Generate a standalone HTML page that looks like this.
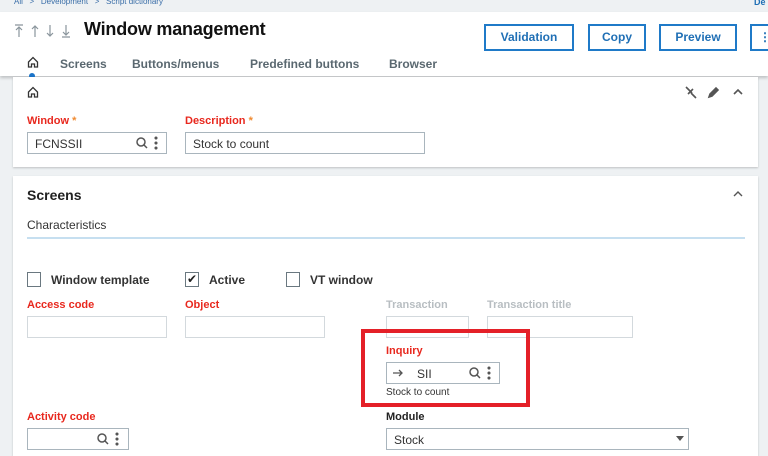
<!DOCTYPE html><html><head><meta charset="utf-8"><style>
*{box-sizing:border-box;margin:0;padding:0}
body{width:768px;height:451px;overflow:hidden;background:#eef1f3;font-family:"Liberation Sans",sans-serif;position:relative;font-size:12px;color:#222}
.a{position:absolute}
.lab{position:absolute;font-size:11px;font-weight:bold;color:#e8281e;font-family:"Liberation Sans",sans-serif}
.inp{position:absolute;border:1px solid #a9b5bd;background:#fff;height:22px;font-size:12px;padding:4px 7px;color:#333}
.inpl{border-color:#d3d9dd}
.btn{position:absolute;top:24px;height:27px;border:2px solid #1f7ac8;color:#1f6fb5;font-weight:bold;font-size:12px;text-align:center;line-height:23px;background:#fff}
.tab{position:absolute;top:57px;font-size:12px;font-weight:bold;color:#5a6870}
.cb{position:absolute;width:14px;height:15px;border:1px solid #6a7880;background:#fff}
.cbl{position:absolute;font-size:12px;font-weight:bold;color:#333}
.sq{position:absolute;top:4px}
</style></head><body>
<div class="a" style="left:14px;top:-3px;font-size:8px;color:#3a6ea8;white-space:pre">All   &gt;   Development   &gt;   Script dictionary</div>
<div class="a" style="left:754px;top:-3px;font-size:9px;font-weight:bold;color:#1f6fb5">De</div>
<div class="a" style="left:0;top:12px;width:768px;height:64px;background:#fff;box-shadow:0 2px 3px rgba(0,0,0,.2)"></div>
<svg class="a" style="left:14px;top:24px" width="58" height="14" viewBox="0 0 58 14" fill="none" stroke="#8a959c" stroke-width="1.2"><path d="M1 1H9M5 13V3M2 6L5 3 8 6"/><path d="M21 13V2M18 5L21 2 24 5"/><path d="M36 1V12M33 9L36 12 39 9"/><path d="M52 1V11M49 8L52 11 55 8M48 13H56"/></svg>
<div class="a" style="left:84px;top:19px;font-size:18px;font-weight:bold;color:#111;letter-spacing:-0.2px">Window management</div>
<div class="btn" style="left:484px;width:90px">Validation</div>
<div class="btn" style="left:588px;width:58px">Copy</div>
<div class="btn" style="left:659px;width:78px">Preview</div>
<div class="btn" style="left:750px;width:30px;text-align:left;padding-left:7px">⋮</div>
<svg class="a" style="left:27px;top:56px" width="12" height="12" viewBox="0 0 12 12"><path d="M1.5 6L6 1.5 10.5 6V11H7.5V8H4.5V11H1.5Z" fill="none" stroke="#333" stroke-width="1.3"/></svg>
<div class="a" style="left:29px;top:73px;width:6px;height:6px;border-radius:50%;background:#1a73c8"></div>
<div class="tab" style="left:60px">Screens</div>
<div class="tab" style="left:132px">Buttons/menus</div>
<div class="tab" style="left:250px">Predefined buttons</div>
<div class="tab" style="left:389px">Browser</div>
<div class="a" style="left:13px;top:77px;width:745px;height:90px;background:#fff;box-shadow:0 1px 2px rgba(0,0,0,.2)"></div>
<svg class="a" style="left:27px;top:86px" width="12" height="12" viewBox="0 0 12 12"><path d="M1.5 6L6 1.5 10.5 6V11H7.5V8H4.5V11H1.5Z" fill="none" stroke="#333" stroke-width="1.3"/></svg>
<svg class="a" style="left:684px;top:85px" width="60" height="14" viewBox="0 0 60 14" fill="none" stroke="#555" stroke-width="1.6"><path d="M2 2L8 8M4 9L9 4M7 8L12 13"/><path d="M25 12L26 9 32 3 34 5 28 11Z" fill="#555"/><path d="M50 9L54 5 58 9"/></svg>
<div class="lab" style="left:27px;top:115px">Window <span style="color:#f08a30">*</span></div>
<div class="inp" style="left:27px;top:132px;width:140px">FCNSSII</div>
<svg class="a" style="left:135px;top:136px" width="26" height="14" viewBox="0 0 26 14" fill="none" stroke="#555" stroke-width="1.5"><circle cx="6" cy="6" r="4"/><path d="M9 9L12 12"/><circle cx="21" cy="2" r=".8" fill="#555"/><circle cx="21" cy="7" r=".8" fill="#555"/><circle cx="21" cy="12" r=".8" fill="#555"/></svg>
<div class="lab" style="left:185px;top:115px">Description <span style="color:#f08a30">*</span></div>
<div class="inp" style="left:185px;top:132px;width:240px">Stock to count</div>
<div class="a" style="left:13px;top:176px;width:745px;height:280px;background:#fff;box-shadow:0 1px 2px rgba(0,0,0,.2)"></div>
<div class="a" style="left:27px;top:187px;font-size:14px;font-weight:bold;color:#222">Screens</div>
<svg class="a" style="left:732px;top:190px" width="12" height="8" viewBox="0 0 12 8" fill="none" stroke="#555" stroke-width="1.4"><path d="M2 6L6 2 10 6"/></svg>
<div class="a" style="left:27px;top:218px;font-size:12px;color:#333">Characteristics</div>
<div class="a" style="left:27px;top:237px;width:718px;height:2px;background:#c6dff0"></div>
<div class="cb" style="left:27px;top:272px"></div><div class="cbl" style="left:51px;top:273px">Window template</div>
<div class="cb" style="left:185px;top:272px;font-size:12px;line-height:13px;text-align:center">✔</div><div class="cbl" style="left:209px;top:273px">Active</div>
<div class="cb" style="left:286px;top:272px"></div><div class="cbl" style="left:310px;top:273px">VT window</div>
<div class="lab" style="left:27px;top:299px">Access code</div>
<div class="inp inpl" style="left:27px;top:316px;width:140px"></div>
<div class="lab" style="left:185px;top:299px">Object</div>
<div class="inp inpl" style="left:185px;top:316px;width:140px"></div>
<div class="lab" style="left:386px;top:299px;color:#b8bec2">Transaction</div>
<div class="inp inpl" style="left:386px;top:316px;width:83px"></div>
<div class="lab" style="left:487px;top:299px;color:#b8bec2">Transaction title</div>
<div class="inp inpl" style="left:487px;top:316px;width:146px"></div>
<div class="a" style="left:361px;top:329px;width:169px;height:78px;border:4px solid #e42028"></div>
<div class="lab" style="left:386px;top:345px">Inquiry</div>
<div class="inp" style="left:386px;top:362px;width:114px;padding-left:30px">SII</div>
<svg class="a" style="left:392px;top:368px" width="12" height="10" viewBox="0 0 12 10" fill="none" stroke="#555" stroke-width="1.3"><path d="M1 5H10M7 2L10 5 7 8"/></svg>
<svg class="a" style="left:468px;top:366px" width="26" height="14" viewBox="0 0 26 14" fill="none" stroke="#555" stroke-width="1.5"><circle cx="6" cy="6" r="4"/><path d="M9 9L12 12"/><circle cx="21" cy="2" r=".8" fill="#555"/><circle cx="21" cy="7" r=".8" fill="#555"/><circle cx="21" cy="12" r=".8" fill="#555"/></svg>
<div class="a" style="left:386px;top:387px;font-size:10px;color:#333">Stock to count</div>
<div class="lab" style="left:27px;top:411px">Activity code</div>
<div class="inp" style="left:27px;top:428px;width:102px"></div>
<svg class="a" style="left:96px;top:432px" width="26" height="14" viewBox="0 0 26 14" fill="none" stroke="#555" stroke-width="1.5"><circle cx="6" cy="6" r="4"/><path d="M9 9L12 12"/><circle cx="21" cy="2" r=".8" fill="#555"/><circle cx="21" cy="7" r=".8" fill="#555"/><circle cx="21" cy="12" r=".8" fill="#555"/></svg>
<div class="lab" style="left:386px;top:411px;color:#222">Module</div>
<div class="inp" style="left:386px;top:428px;width:303px">Stock</div>
<svg class="a" style="left:676px;top:436px" width="8" height="5" viewBox="0 0 8 5"><path d="M0 0H8L4 5Z" fill="#555"/></svg>
</body></html>
